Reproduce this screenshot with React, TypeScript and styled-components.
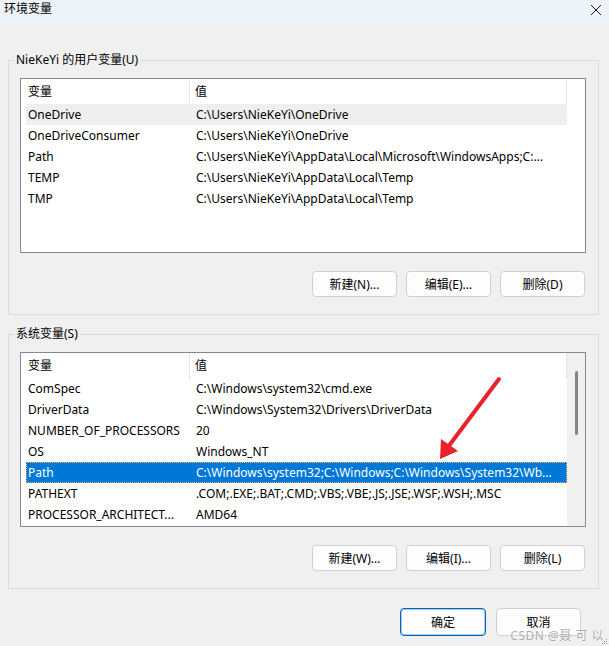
import React from "react";
import styled, { createGlobalStyle } from "styled-components";

type Variable = { name: string; value: string };

const userVars: Variable[] = [
  { name: "OneDrive", value: "C:\\Users\\NieKeYi\\OneDrive" },
  { name: "OneDriveConsumer", value: "C:\\Users\\NieKeYi\\OneDrive" },
  {
    name: "Path",
    value: "C:\\Users\\NieKeYi\\AppData\\Local\\Microsoft\\WindowsApps;C:...",
  },
  { name: "TEMP", value: "C:\\Users\\NieKeYi\\AppData\\Local\\Temp" },
  { name: "TMP", value: "C:\\Users\\NieKeYi\\AppData\\Local\\Temp" },
];

const systemVars: Variable[] = [
  { name: "ComSpec", value: "C:\\Windows\\system32\\cmd.exe" },
  { name: "DriverData", value: "C:\\Windows\\System32\\Drivers\\DriverData" },
  { name: "NUMBER_OF_PROCESSORS", value: "20" },
  { name: "OS", value: "Windows_NT" },
  {
    name: "Path",
    value: "C:\\Windows\\system32;C:\\Windows;C:\\Windows\\System32\\Wb...",
  },
  { name: "PATHEXT", value: ".COM;.EXE;.BAT;.CMD;.VBS;.VBE;.JS;.JSE;.WSF;.WSH;.MSC" },
  { name: "PROCESSOR_ARCHITECT...", value: "AMD64" },
];

const EnvironmentVariables = () => {
  return (
    <>
      <GlobalStyle />
      <Window>
        <TitleBar>
          <Title>环境变量</Title>
          <CloseIcon width="12" height="12" viewBox="0 0 12 12">
            <path d="M1 1 L11 11 M11 1 L1 11" stroke="#1a1a1a" strokeWidth="1" />
          </CloseIcon>
        </TitleBar>

        <Content>
          <Group>
            <Legend>NieKeYi 的用户变量(U)</Legend>
            <VariableList rows={userVars} hover={0} />
            <ButtonRow>
              <Button>新建(N)...</Button>
              <Button>编辑(E)...</Button>
              <Button>删除(D)</Button>
            </ButtonRow>
          </Group>

          <Group $second>
            <Legend>系统变量(S)</Legend>
            <VariableList rows={systemVars} selected={4} scrollable />
            <ButtonRow>
              <Button>新建(W)...</Button>
              <Button>编辑(I)...</Button>
              <Button>删除(L)</Button>
            </ButtonRow>
          </Group>

          <DialogButtons>
            <Button $primary $wide>
              确定
            </Button>
            <Button>取消</Button>
          </DialogButtons>
        </Content>

        <Arrow width="609" height="646" viewBox="0 0 609 646">
          <line
            x1="499"
            y1="379"
            x2="448"
            y2="447"
            stroke="#e8222a"
            strokeWidth="4"
            strokeLinecap="round"
          />
          <polygon points="440,459 441,439 458,451" fill="#e8222a" />
        </Arrow>

        <Watermark>CSDN @聂 可 以</Watermark>
        <Grip width="6" height="6" viewBox="0 0 6 6">
          <rect x="4" y="0" width="1" height="1" fill="#9a9a9a" />
          <rect x="2" y="2" width="1" height="1" fill="#9a9a9a" />
          <rect x="4" y="2" width="1" height="1" fill="#9a9a9a" />
          <rect x="0" y="4" width="1" height="1" fill="#9a9a9a" />
          <rect x="2" y="4" width="1" height="1" fill="#9a9a9a" />
          <rect x="4" y="4" width="1" height="1" fill="#9a9a9a" />
        </Grip>
      </Window>
    </>
  );
};

const VariableList = ({
  rows,
  selected,
  hover,
  scrollable,
}: {
  rows: Variable[];
  selected?: number;
  hover?: number;
  scrollable?: boolean;
}) => (
  <ListBox>
    <ListBody>
      <HeaderRow>
        <HeaderCell $first>变量</HeaderCell>
        <HeaderCell>值</HeaderCell>
      </HeaderRow>
      {rows.map((r, i) => (
        <Row key={r.name + i} $selected={i === selected} $hover={i === hover}>
          <NameCell>{r.name}</NameCell>
          <ValueCell>{r.value}</ValueCell>
        </Row>
      ))}
    </ListBody>
    <ScrollTrack $visible={!!scrollable}>{scrollable && <Thumb />}</ScrollTrack>
  </ListBox>
);

export default EnvironmentVariables;

const GlobalStyle = createGlobalStyle`
  body {
    margin: 0;
    background: #f0f0f0;
    font-family: "Noto Sans", "Noto Sans CJK SC", sans-serif;
    font-size: 12px;
    color: #000;
  }
`;

const Window = styled.div`
  position: relative;
  width: 609px;
  height: 646px;
  overflow: hidden;
  background: #f0f0f0;
  display: flex;
  flex-direction: column;
`;

const TitleBar = styled.div`
  height: 24px;
  background: #eef2f9;
  display: flex;
  justify-content: space-between;
  align-items: flex-start;
  padding: 1px 7px 0 4px;
  box-sizing: border-box;
`;

const Title = styled.span`
  line-height: 16px;
  font-size: 12px;
`;

const CloseIcon = styled.svg`
  margin-top: 3px;
`;

const Content = styled.div`
  display: flex;
  flex-direction: column;
  padding: 28px 10px 0 8px;
`;

const Group = styled.fieldset<{ $second?: boolean }>`
  margin: ${(p) => (p.$second ? "11px" : "0")} 0 0 0;
  padding: 10px 12px 17px 11px;
  border: 1px solid #dcdcdc;
  border-radius: 0;
  display: flex;
  flex-direction: column;
`;

const Legend = styled.legend`
  margin-left: -6px;
  padding: 0 2px;
  line-height: 16px;
  font-size: 12px;
`;

const ListBox = styled.div`
  height: 175px;
  box-sizing: border-box;
  border: 1px solid #848991;
  background: #fff;
  display: flex;
  overflow: hidden;
`;

const ListBody = styled.div`
  flex: 1;
  padding-left: 5px;
`;

const HeaderRow = styled.div`
  display: grid;
  grid-template-columns: 164px 377px;
  height: 25px;
`;

const HeaderCell = styled.div<{ $first?: boolean }>`
  border-right: 1px solid #e5e5e5;
  padding-left: ${(p) => (p.$first ? "2px" : "5px")};
  line-height: 26px;
`;

const Row = styled.div<{ $selected?: boolean; $hover?: boolean }>`
  display: grid;
  grid-template-columns: 164px 377px;
  height: 21px;
  line-height: 22px;
  box-sizing: border-box;
  background: ${(p) => (p.$selected ? "#0078d7" : p.$hover ? "#efefef" : "transparent")};
  color: ${(p) => (p.$selected ? "#fff" : "#000")};
  outline: ${(p) => (p.$selected ? "1px dotted #f7b26a" : "none")};
  outline-offset: -1px;
`;

const NameCell = styled.div`
  padding-left: 2px;
  white-space: nowrap;
  overflow: hidden;
`;

const ValueCell = styled.div`
  padding-left: 6px;
  white-space: nowrap;
  overflow: hidden;
`;

const ScrollTrack = styled.div<{ $visible: boolean }>`
  width: 18px;
  background: ${(p) => (p.$visible ? "#f0f0f0" : "#fff")};
  display: flex;
  justify-content: center;
  padding-top: 18px;
  box-sizing: border-box;
`;

const Thumb = styled.div`
  width: 3px;
  height: 64px;
  border-radius: 2px;
  background: #858585;
`;

const ButtonRow = styled.div`
  display: flex;
  justify-content: flex-end;
  gap: 9px;
  margin-top: 18px;
  padding-right: 1px;
`;

const Button = styled.button<{ $primary?: boolean; $wide?: boolean }>`
  width: ${(p) => (p.$wide ? "86px" : "85px")};
  height: 26px;
  box-sizing: border-box;
  border-radius: 4px;
  background: #fdfdfd;
  border: 1px solid ${(p) => (p.$primary ? "#0067c0" : "#d0d0d0")};
  box-shadow: ${(p) => (p.$primary ? "inset 0 0 0 1px rgba(0, 103, 192, 0.35)" : "none")};
  font-family: "Noto Sans", "Noto Sans CJK SC", sans-serif;
  font-size: 12px;
  color: #000;
  padding: 0;
`;

const DialogButtons = styled.div`
  display: flex;
  justify-content: flex-end;
  gap: 10px;
  margin-top: 19px;
  padding-right: 18px;

  & > button {
    height: 28px;
  }
`;

const Arrow = styled.svg`
  position: absolute;
  left: 0;
  top: 0;
  pointer-events: none;
`;

const Watermark = styled.div`
  position: absolute;
  right: 5px;
  bottom: 2px;
  font-size: 12px;
  line-height: 16px;
  color: rgba(120, 120, 120, 0.6);
  text-shadow: 0 0 2px #fff;
  letter-spacing: 0.5px;
`;

const Grip = styled.svg`
  position: absolute;
  right: 1px;
  bottom: 1px;
`;
